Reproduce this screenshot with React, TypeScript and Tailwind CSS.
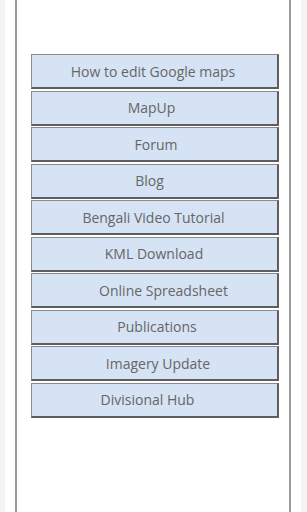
// label offsets copied from the reference, which does not centre the labels exactly
const LINKS = [
	{ label: "How to edit Google maps", shift: "pr-[3px]" },
	{ label: "MapUp", shift: "pr-[6px]" },
	{ label: "Forum", shift: "pl-[3px]" },
	{ label: "Blog", shift: "pr-[10px]" },
	{ label: "Bengali Video Tutorial", shift: "pr-[2px]" },
	{ label: "KML Download", shift: "pr-[1px]" },
	{ label: "Online Spreadsheet", shift: "pl-[18px]" },
	{ label: "Publications", shift: "pl-[5px]" },
	{ label: "Imagery Update", shift: "pl-[7px]" },
	{ label: "Divisional Hub", shift: "pr-[14px]" },
];

export default function App() {
	return (
		<div className="flex h-[512px] w-[307px] overflow-hidden bg-white font-['Open_Sans',sans-serif]">
			{/* left page gutter */}
			<div className="w-[5px] shrink-0 bg-[#f4f4f4]" />
			<div className="w-[10px] shrink-0" />

			{/* main panel */}
			<div className="h-full w-[276px] shrink-0 border-x-2 border-[#9a9a9a] pt-[54px] pl-[14px]">
				<div className="flex w-[248px] flex-col gap-[1.5px]">
					{LINKS.map((link) => (
						<a
							className={`flex h-[35px] items-center justify-center border border-t-[#8a8a8a] border-l-[#8a8a8a] border-r-2 border-b-2 border-r-[#5e5e5e] border-b-[#5e5e5e] bg-[#d5e3f4] pt-[1px] text-[14px] text-[#666] leading-none ${link.shift}`}
							href="#"
							key={link.label}
						>
							{link.label}
						</a>
					))}
				</div>
			</div>

			<div className="w-[10px] shrink-0" />
			<div className="flex-1 bg-[#f4f4f4]" />
		</div>
	);
}
